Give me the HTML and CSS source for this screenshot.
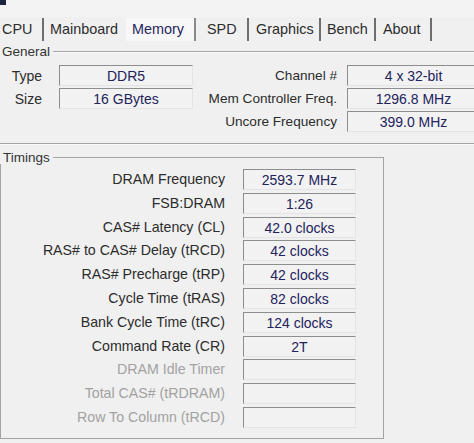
FILE: index.html
```html
<!DOCTYPE html>
<html>
<head>
<meta charset="utf-8">
<link rel="stylesheet" href="styles.css">
</head>
<body>
<div class="win">
  <div class="topstrip"><span class="corner"></span></div>
  <div class="tabs">
    <div class="tab t-cpu">CPU</div>
    <div class="tab t-main">Mainboard</div>
    <div class="tab t-mem active">Memory</div>
    <div class="tab t-spd">SPD</div>
    <div class="tab t-gfx">Graphics</div>
    <div class="tab t-bench">Bench</div>
    <div class="tab t-about">About</div>
  </div>

  <div class="ghead general-head"><span class="glabel">General</span><i class="rule"></i></div>
  <div class="gen-grid">
    <div class="lbl-l">Type</div><div class="box box-l">DDR5</div>
    <div class="lbl-r">Channel #</div><div class="box box-r">4 x 32-bit</div>
    <div class="lbl-l">Size</div><div class="box box-l">16 GBytes</div>
    <div class="lbl-r">Mem Controller Freq.</div><div class="box box-r">1296.8 MHz</div>
    <div class="lbl-l"></div><div class="empty"></div>
    <div class="lbl-r">Uncore Frequency</div><div class="box box-r">399.0 MHz</div>
  </div>
  <div class="groove"></div>

  <div class="ghead timings-head"><span class="glabel">Timings</span><i class="rule rule-t"></i></div>
  <div class="timings">
    <div class="trow"><div class="tlbl">DRAM Frequency</div><div class="box tbox">2593.7 MHz</div></div>
    <div class="trow"><div class="tlbl">FSB:DRAM</div><div class="box tbox">1:26</div></div>
    <div class="trow"><div class="tlbl">CAS# Latency (CL)</div><div class="box tbox">42.0 clocks</div></div>
    <div class="trow"><div class="tlbl">RAS# to CAS# Delay (tRCD)</div><div class="box tbox">42 clocks</div></div>
    <div class="trow"><div class="tlbl">RAS# Precharge (tRP)</div><div class="box tbox">42 clocks</div></div>
    <div class="trow"><div class="tlbl">Cycle Time (tRAS)</div><div class="box tbox">82 clocks</div></div>
    <div class="trow"><div class="tlbl">Bank Cycle Time (tRC)</div><div class="box tbox">124 clocks</div></div>
    <div class="trow"><div class="tlbl">Command Rate (CR)</div><div class="box tbox">2T</div></div>
    <div class="trow"><div class="tlbl dis">DRAM Idle Timer</div><div class="box tbox"></div></div>
    <div class="trow"><div class="tlbl dis">Total CAS# (tRDRAM)</div><div class="box tbox"></div></div>
    <div class="trow"><div class="tlbl dis">Row To Column (tRCD)</div><div class="box tbox"></div></div>
  </div>
</div>
</body>
</html>
```

FILE: styles.css
```css
* { box-sizing: border-box; }
html, body {
  margin: 0;
  padding: 0;
  background: #f0f0f0;
}
body {
  font-family: "Liberation Sans", Arial, sans-serif;
  font-size: 14px;
  color: #2c2c2c;
}
.win {
  width: 474px;
  height: 443px;
  overflow: hidden;
  background: #f0f0f0;
}
.topstrip {
  height: 17px;
  background: #f3f3f3;
}
.corner {
  display: block;
  width: 6px;
  height: 5px;
  background: #1d2440;
}

/* tabs */
.tabs {
  display: flex;
  height: 24px;
}
.tab {
  height: 23px;
  margin-top: 1px;
  line-height: 23px;
  font-size: 14.4px;
  color: #2c2c2c;
  border-right: 2px solid #6e6e6e;
  white-space: nowrap;
}
.t-cpu { width: 44px; padding-left: 2px; }
.t-main { width: 82px; padding-left: 6px; border-right: none; }
.t-mem { width: 70px; padding-left: 6px; color: #26265e; background: #f7f7f7; border-right-color: #8a8a8a; }
.t-spd { width: 53px; padding-left: 11px; }
.t-gfx { width: 72px; padding-left: 7px; }
.t-bench { width: 55px; padding-left: 6px; }
.t-about { width: 56px; padding-left: 7px; }

/* group heads */
.ghead {
  display: flex;
  height: 13px;
  align-items: center;
}
.general-head { margin-top: 4px; }
.glabel {
  line-height: 13px;
  padding-left: 2px;
  padding-right: 3px;
  font-size: 13.5px;
  color: #333;
}
.rule {
  flex: 1;
  height: 2px;
  border-top: 1px solid #a4a4a4;
  border-bottom: 1px solid #fafafa;
}

/* general grid */
.gen-grid {
  display: grid;
  grid-template-columns: 59px 134px 154px 133px;
  grid-auto-rows: 23px;
  margin-top: 7px;
  width: 480px;
}
.lbl-l {
  text-align: right;
  padding-right: 17px;
  line-height: 22px;
  white-space: nowrap;
}
.lbl-r {
  text-align: right;
  padding-right: 10px;
  line-height: 22px;
  font-size: 13.6px;
  white-space: nowrap;
}
.box {
  height: 21px;
  line-height: 20px;
  text-align: center;
  font-size: 14px;
  color: #23235c;
  background: #f2f2f2;
  border: 1px solid;
  border-color: #8e8e8e #e4e4e4 #e4e4e4 #8e8e8e;
}
.groove {
  margin-top: 9px;
  height: 2px;
  border-top: 1px solid #a4a4a4;
  border-bottom: 1px solid #fafafa;
}

/* timings */
.timings-head {
  margin-top: 6px;
  width: 384px;
}
.timings-head .glabel { padding-left: 3px; }
.rule-t {
  align-self: flex-end;
  height: 7px;
  border-bottom: none;
  border-right: 1px solid #a4a4a4;
}
.timings {
  width: 384px;
  padding: 5px 0 7px 0;
  border: 1px solid #a4a4a4;
  border-top: none;
}
.trow {
  display: flex;
  height: 23.8px;
  align-items: flex-start;
}
.tlbl {
  width: 224px;
  text-align: right;
  line-height: 21px;
  font-size: 14.2px;
  white-space: nowrap;
}
.tlbl.dis { color: #a2a2a2; }
.tbox {
  margin-left: 18px;
  width: 113px;
}
```
